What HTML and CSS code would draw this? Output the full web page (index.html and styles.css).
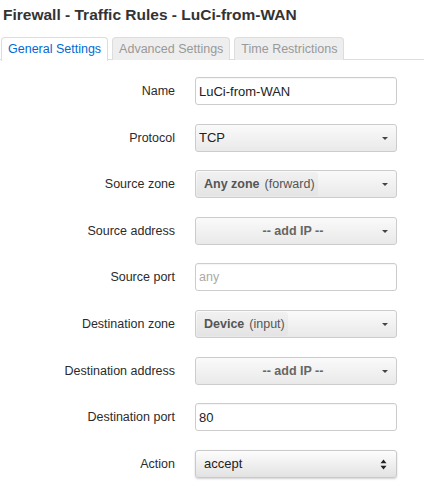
FILE: index.html
```html
<!DOCTYPE html>
<html>
<head>
<meta charset="utf-8">
<link rel="stylesheet" href="styles.css">
</head>
<body>
<h2 class="title">Firewall - Traffic Rules - LuCi-from-WAN</h2>
<ul class="tabs">
  <li class="tab active">General Settings</li>
  <li class="tab">Advanced Settings</li>
  <li class="tab">Time Restrictions</li>
</ul>
<div class="form">
  <div class="row">
    <div class="lbl">Name</div>
    <div class="input">LuCi-from-WAN</div>
  </div>
  <div class="row">
    <div class="lbl">Protocol</div>
    <div class="select"><span class="val">TCP</span><span class="caret"></span></div>
  </div>
  <div class="row">
    <div class="lbl">Source zone</div>
    <div class="select"><span class="zone"><b>Any zone</b><span class="sub">(forward)</span></span><span class="caret"></span></div>
  </div>
  <div class="row">
    <div class="lbl">Source address</div>
    <div class="select center"><span class="add">-- add IP --</span><span class="caret"></span></div>
  </div>
  <div class="row">
    <div class="lbl">Source port</div>
    <div class="input placeholder">any</div>
  </div>
  <div class="row">
    <div class="lbl">Destination zone</div>
    <div class="select"><span class="zone"><b>Device</b><span class="sub">(input)</span></span><span class="caret"></span></div>
  </div>
  <div class="row">
    <div class="lbl">Destination address</div>
    <div class="select center"><span class="add">-- add IP --</span><span class="caret"></span></div>
  </div>
  <div class="row">
    <div class="lbl">Destination port</div>
    <div class="input">80</div>
  </div>
  <div class="row">
    <div class="lbl">Action</div>
    <div class="native"><span class="val">accept</span>
      <svg class="updown" width="7" height="11" viewBox="0 0 7 11"><path d="M3.5 0.5 L6.5 4.2 L0.5 4.2 Z M3.5 10.5 L6.5 6.8 L0.5 6.8 Z" fill="#222"/></svg>
    </div>
  </div>
</div>
</body>
</html>
```

FILE: styles.css
```css
html, body {
  margin: 0;
  padding: 0;
  background: #fff;
}
body {
  font-family: "Liberation Sans", Arial, Helvetica, sans-serif;
  font-size: 12.5px;
  color: #333;
  width: 424px;
  height: 500px;
  overflow: hidden;
}
.title {
  margin: 0;
  padding: 5px 0 0 3px;
  font-size: 15.5px;
  line-height: 20px;
  font-weight: bold;
  color: #333;
}
.tabs {
  list-style: none;
  margin: 12px 0 0 0;
  padding: 0 0 0 1px;
  display: flex;
  gap: 4px;
  border-bottom: 1px solid #ddd;
  height: 22px;
}
.tab {
  height: 22px;
  line-height: 22px;
  padding: 0 6px;
  border: 1px solid #ddd;
  border-bottom: none;
  border-radius: 4px 4px 0 0;
  background: #eee;
  color: #999;
  font-size: 12.5px;
}
.tab.active {
  background: #fff;
  color: #0069d6;
  height: 23px;
  padding: 0 6px;
}
.form {
  padding-top: 17px;
  display: flex;
  flex-direction: column;
  gap: 18.6px;
}
.row {
  display: flex;
  align-items: center;
  height: 28px;
}
.lbl {
  width: 175px;
  text-align: right;
  color: #2b2b2b;
  flex: none;
}
.input, .select, .native {
  margin-left: 20px;
  width: 202px;
  height: 28px;
  box-sizing: border-box;
  border: 1px solid #ccc;
  border-radius: 3px;
  display: flex;
  align-items: center;
  position: relative;
}
.input {
  background: #fff;
  padding-left: 3px;
  color: #222;
  font-size: 13px;
  box-shadow: inset 0 1px 1px rgba(0,0,0,0.04);
}
.input.placeholder {
  color: #aaa;
  font-size: 12.5px;
}
.select {
  background: linear-gradient(#fafafa, #e9e9e9);
  padding-left: 2px;
}
.select .val {
  padding-left: 1px;
  color: #222;
  font-size: 13px;
}
.select .zone {
  height: 24px;
  display: flex;
  align-items: center;
  margin-left: -1px;
  padding: 0 3px 0 7px;
  border-radius: 3px;
  background: linear-gradient(#f1f1f1, #e4e4e4);
  color: #555;
}
.select .zone b {
  color: #555;
}
.select .zone .sub {
  margin-left: 5px;
}
.select.center {
  justify-content: center;
}
.select .add {
  font-weight: bold;
  color: #666;
  margin-left: -8px;
}
.caret {
  position: absolute;
  right: 8px;
  top: 12px;
  width: 0;
  height: 0;
  border-left: 3px solid transparent;
  border-right: 3px solid transparent;
  border-top: 3px solid #444;
}
.native {
  background: linear-gradient(#fdfdfd, #e2e2e2);
  border-color: #c9c9c9;
  box-shadow: 0 1px 2px rgba(0,0,0,0.18);
  padding-left: 8px;
}
.native .val {
  color: #222;
  font-size: 13px;
}
.updown {
  position: absolute;
  right: 9px;
  top: 8px;
}
```
